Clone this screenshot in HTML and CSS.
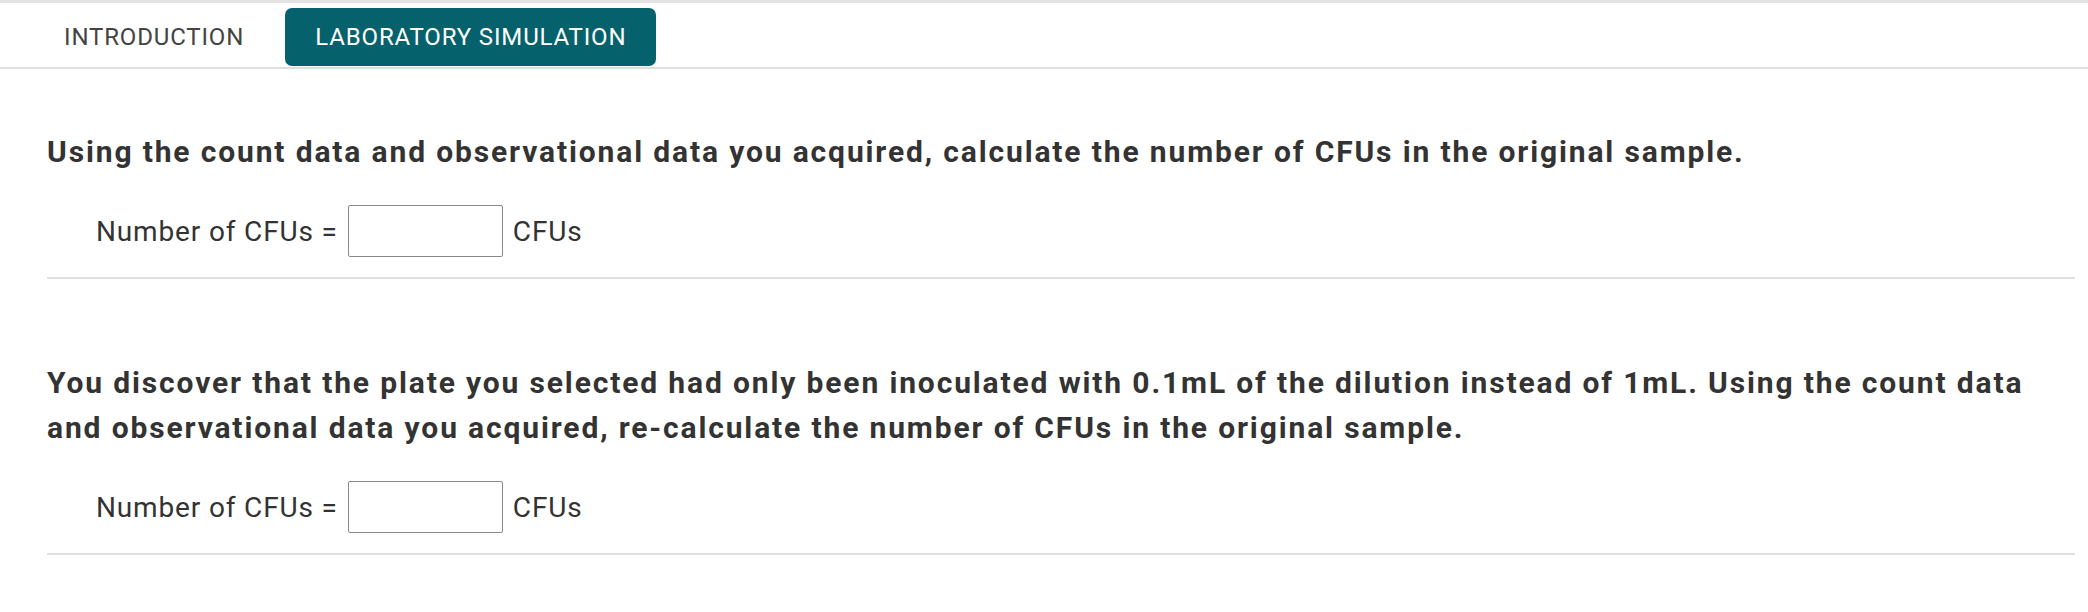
FILE: index.html
```html
<!DOCTYPE html>
<html lang="en">
<head>
  <meta charset="UTF-8" />
  <meta name="viewport" content="width=device-width, initial-scale=1.0"/>
  <title>Laboratory Simulation</title>
  <link rel="stylesheet" href="styles.css">
</head>
<body>
  <!-- Tabs -->
  <div class="tabs">
    <a href="#" class="tab">INTRODUCTION</a>
    <a href="#" class="tab activo">LABORATORY SIMULATION</a>
  </div>

  <!-- Preguntas -->
  <div class="contenido">
    <div class="pregunta">
      <h2>Using the count data and observational data you acquired, calculate the number of CFUs in the original sample.</h2>
      <div class="respuesta">
        <label for="cfu1">Number of CFUs =</label>
        <input type="text" id="cfu1">
        <span>CFUs</span>
      </div>
    </div>

    <div class="pregunta">
      <h2>You discover that the plate you selected had only been inoculated with 0.1mL of the dilution instead of 1mL. Using the count data and observational data you acquired, re-calculate the number of CFUs in the original sample.</h2>
      <div class="respuesta">
        <label for="cfu2">Number of CFUs =</label>
        <input type="text" id="cfu2">
        <span>CFUs</span>
      </div>
    </div>
  </div>
</body>
</html>
```

FILE: styles.css
```css
body {
  font-family: 'Roboto', 'Liberation Sans', sans-serif;
  background: #fff;
  margin: 0;
  padding: 0;
  border-top: 3px solid #e2e2e2;
  color: #333;
}
.tabs {
  display: flex;
  gap: 11px;
  padding: 5px 0 1px 34px;
  border-bottom: 2px solid #dedede;
}
.tab {
  display: block;
  height: 58px;
  line-height: 58px;
  padding: 0 30px;
  font-size: 24px;
  letter-spacing: 0.85px;
  color: #444;
  text-decoration: none;
  border-radius: 7px;
}
.tab.activo {
  background-color: #05616b;
  color: #fff;
}
.contenido {
  padding: 0 13px 0 47px;
}
.pregunta {
  padding: 60px 0 20px;
  border-bottom: 2px solid #e0e0e0;
}
.pregunta + .pregunta {
  margin-top: 21px;
}
.pregunta h2 {
  margin: 0 0 31px;
  font-size: 30px;
  line-height: 45px;
  font-weight: bold;
  letter-spacing: 1.86px;
  color: #333;
}
.respuesta {
  display: flex;
  align-items: center;
  gap: 10px;
  padding-left: 49px;
  font-size: 28px;
  letter-spacing: 0.85px;
  color: #333;
}
.respuesta input {
  box-sizing: border-box;
  width: 155px;
  height: 52px;
  border: 1px solid #8a8a8a;
  border-radius: 2px;
  margin: 0;
  font-size: 24px;
}
```
